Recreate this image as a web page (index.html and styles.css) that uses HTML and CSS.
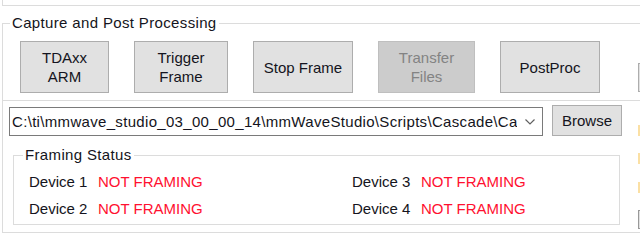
FILE: index.html
```html
<!DOCTYPE html>
<html lang="en">
<head>
    <meta charset="UTF-8">
    <meta name="viewport" content="width=device-width, initial-scale=1.0">
    <title>Capture and Post Processing</title>
    <link rel="stylesheet" href="styles.css">
</head>
<body>
    <div class="prev-group"></div>

    <fieldset class="group capture">
        <legend>Capture and Post Processing</legend>

        <div class="btn-row">
            <button class="btn w-arm">TDAxx<br>ARM</button>
            <button class="btn w-trigger">Trigger<br>Frame</button>
            <button class="btn w-stop">Stop Frame</button>
            <button class="btn w-transfer" disabled>Transfer<br>Files</button>
            <button class="btn w-post">PostProc</button>
            <button class="btn partial"></button>
        </div>

        <div class="lower">
            <div class="main">
                <div class="path-row">
                    <div class="combo">
                        <span class="combo-text">C:\ti\mmwave_studio_03_00_00_14\mmWaveStudio\Scripts\Cascade\Ca</span>
                        <svg class="chevron" width="10" height="6" viewBox="0 0 10 6">
                            <path d="M0.5 0.5 L5 5 L9.5 0.5" fill="none" stroke="#606060" stroke-width="1.2"/>
                        </svg>
                    </div>
                    <button class="btn browse">Browse</button>
                </div>

                <fieldset class="group framing">
                    <legend>Framing Status</legend>
                    <div class="status-grid">
                        <div class="status"><span class="dev">Device 1</span><span class="off">NOT FRAMING</span></div>
                        <div class="status"><span class="dev">Device 3</span><span class="off">NOT FRAMING</span></div>
                        <div class="status"><span class="dev">Device 2</span><span class="off">NOT FRAMING</span></div>
                        <div class="status"><span class="dev">Device 4</span><span class="off">NOT FRAMING</span></div>
                    </div>
                </fieldset>
            </div>

            <!-- controls cut off by the window edge -->
            <div class="side">
                <div class="led"></div>
                <div class="led"></div>
                <div class="led"></div>
                <div class="side-box"></div>
            </div>
        </div>
    </fieldset>
</body>
</html>
```

FILE: styles.css
```css
:root {
    --line: #dcdcdc;
    --btn-bg: #e1e1e1;
    --btn-border: #adadad;
    --text: #141420;
}

* {
    box-sizing: border-box;
}

body {
    margin: 0;
    width: 640px;
    height: 240px;
    overflow: hidden;
    background: #ffffff;
    font-family: "Liberation Sans", Arial, sans-serif;
    font-size: 15px;
    color: var(--text);
}

.prev-group {
    height: 6px;
    margin-left: 2px;
    border-left: 1px solid var(--line);
    border-bottom: 1px solid var(--line);
}

.group {
    margin: 0;
    padding: 0;
    min-width: 0;
    border: 1px solid var(--line);
}

.group legend {
    line-height: 18px;
    padding: 0 2px;
    letter-spacing: 0.35px;
}

.capture {
    width: 720px;
    margin: 8px 0 0 2px;
}

.capture > legend {
    margin-left: 7px;
}

.btn-row {
    display: flex;
    gap: 25px;
    margin-top: 9px;
    padding-left: 17px;
}

.btn {
    height: 52px;
    background: var(--btn-bg);
    border: 1px solid var(--btn-border);
    border-radius: 0;
    padding: 0;
    font-family: inherit;
    font-size: 15px;
    line-height: 19px;
    color: var(--text);
}

.btn:disabled {
    background: #cccccc;
    border-color: #bfbfbf;
    color: #838383;
}

.w-arm { width: 89px; }
.w-trigger { width: 94px; }
.w-stop { width: 100px; }
.w-transfer { width: 97px; }
.w-post { width: 100px; }

.partial {
    width: 80px;
    height: 29px;
    align-self: flex-end;
    margin-bottom: 1px;
    margin-left: 13px;
}

.lower {
    display: flex;
    margin-top: 7px;
    border-top: 1px solid var(--line);
}

.main {
    width: 619px;
}

.path-row {
    display: flex;
    align-items: flex-start;
    gap: 9px;
    padding: 4px 0 0 6px;
}

.combo {
    display: flex;
    align-items: center;
    width: 534px;
    height: 29px;
    margin-top: 2px;
    border: 1px solid #7a7a7a;
    padding-left: 2px;
}

.combo-text {
    flex: 1;
    overflow: hidden;
    white-space: nowrap;
    letter-spacing: 0.32px;
}

.chevron {
    margin: 1px 7px 0 8px;
}

.browse {
    width: 70px;
    height: 31px;
    line-height: 29px;
}

.framing {
    width: 607px;
    margin: 10px 0 7px 10px;
}

.framing > legend {
    margin-left: 9px;
}

.status-grid {
    display: grid;
    grid-template-columns: 323px 1fr;
    padding: 4px 0 2px 15px;
}

.status {
    line-height: 27px;
    white-space: nowrap;
}

.dev {
    display: inline-block;
    width: 69px;
}

.off {
    color: #ff1030;
}

.side {
    margin-left: 16px;
    padding-top: 24px;
}

.led {
    width: 10px;
    height: 11px;
    margin-bottom: 17px;
    background: #fbe0a4;
}

.led:nth-child(2) {
    margin-bottom: 18px;
}

.side-box {
    width: 40px;
    height: 19px;
    margin-top: 3px;
    border: 1px solid #999999;
    background: var(--btn-bg);
}
```
